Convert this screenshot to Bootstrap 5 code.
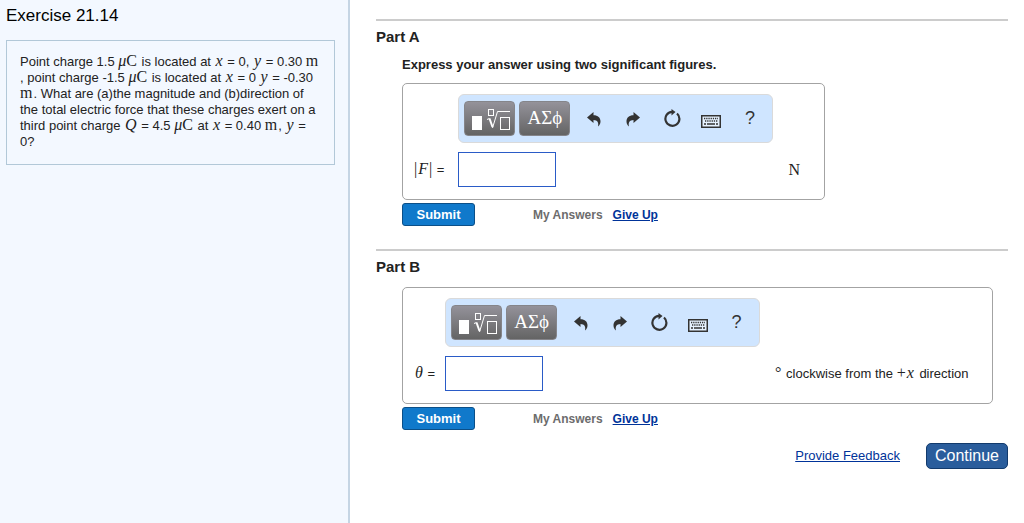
<!DOCTYPE html>
<html lang="en">
<head>
<meta charset="utf-8">
<meta name="viewport" content="width=device-width, initial-scale=1">
<title>Exercise 21.14</title>
<link href="https://cdn.jsdelivr.net/npm/bootstrap@5.3.0/dist/css/bootstrap.min.css" rel="stylesheet">
<style>
  body { font: 13px/16px "Liberation Sans", Arial, sans-serif; color: #222; background: #fff; }
  .problem-pane { background: #f3f8ff; border-right: 2px solid #c5d5e4; padding: 6px 13px 16px 6px; }
  .problem-pane h1 { font-size: 17px; line-height: 20px; color: #000; margin-bottom: 14px; }
  .problem-text { border: 1px solid #b2c8d8; padding: 13px 8px 14px 13px; }
  .work-pane { padding: 19px 16px 16px 26px; }
  .part-section { border-top: 2px solid #ccc; padding-top: 7px; }
  .part-section + .part-section { margin-top: 23px; }
  .part-section h2 { font-size: 15px; line-height: 18px; font-weight: 700; margin-bottom: 11px; }
  .part-body { padding-left: 26px; }
  .instruction { font-weight: 700; margin-bottom: 10px; }
  .maths { font-family: "Liberation Serif", "Times New Roman", serif; font-size: 16px; line-height: 14px; }
  span.maths { margin-right: 1px; }
  i.maths { margin: 0 1px; }
  .answer-box { width: fit-content; max-width: 100%; border: 1px solid #a3a3a3; border-radius: 5px; padding: 10px 23px 12px 11px; }
  .answer-grid { display: grid; grid-template-columns: auto auto auto; row-gap: 9px; align-items: center; }
  .answer-grid .toolbar { grid-column: 2; }
  .answer-grid label { grid-column: 1; padding-right: 10px; white-space: nowrap; }
  .answer-grid .wide-label { padding-right: 14px; }
  .units { padding-left: 15px; }
  .toolbar { width: 315px; height: 49px; background: #cfe5ff; border: 1px solid #dadada; border-radius: 6px; padding-left: 5px; padding-bottom: 1px; }
  .key-btn { width: 51px; height: 35px; margin-right: 4px; padding: 0; border: 1px solid #85858a; border-radius: 4px; background: linear-gradient(#94929a, #646464); color: #fff; font: 19px/30px "Liberation Serif", serif; }
  .icon-btn { width: 39px; height: 35px; padding: 0; border: 0; background: none; color: #333; font-size: 18px; }
  .answer-input { width: 98px; height: 35px; border: 1px solid #2a5bc7; border-radius: 0; padding: 4px; background: #fff; }
  .submit-btn { width: 73px; height: 23px; padding: 0; background: #1079cb; border: 1px solid #0b4f88; border-radius: 3px; color: #fff; font-size: 13px; font-weight: 700; line-height: 16px; margin-right: 58px; }
  .actions { padding-top: 3px; font-size: 12px; font-weight: 700; color: #6c6c6c; }
  .actions a { margin-left: 10px; }
  .actions a, .feedback { color: #003399; }
  .continue-btn { width: 82px; height: 26px; padding: 0; background: #2a5d9c; border: 1px solid #123a6c; border-radius: 5px; color: #fff; font-size: 16px; line-height: 20px; }
  .page-foot { gap: 26px; margin-top: 13px; }
  @media (min-width: 768px) { .problem-pane { flex: 0 0 350px; } }
</style>
</head>
<body>
<svg class="d-none" aria-hidden="true">
  <symbol id="i-root" viewBox="0 0 40 24">
    <rect x="2" y="8" width="10" height="14" fill="#fff"/>
    <g fill="none" stroke="#fff"><rect x="18.5" y="1.5" width="5" height="6"/><path d="M17 11.500L19.500 10.500"/><path d="M19.500 10.500L22.500 19" stroke-width="2"/><path d="M22.500 20L27.500 3.500H40"/><rect x="30.500" y="9.500" width="9" height="12"/></g>
  </symbol>
  <symbol id="i-undo" viewBox="0 0 16 16"><path fill="#333" d="M1 6.500L7.500 1V4.300C12 4.300 14.500 6.800 14.500 10.500C14.500 12.500 13.600 14.300 12 15.500C12.900 11.500 11.500 9.200 7.500 9V12Z"/></symbol>
  <symbol id="i-reset" viewBox="0 0 18 18"><path d="M14 4.500A7 7 0 1 1 9 2.800" fill="none" stroke="#333" stroke-width="2.200"/><path fill="#333" d="M8.500 0L12.500 3L8.500 6.500Z"/></symbol>
  <symbol id="i-keyboard" viewBox="0 0 20 13"><rect x=".75" y=".75" width="18.500" height="11.500" fill="#e6f2ff" stroke="#333" stroke-width="1.500"/><path d="M3 3.500h14M4 6h13" stroke="#333" stroke-width="1.500" stroke-dasharray="1.300 .9"/><path d="M3 9h2M6 9h8M15 9h2" stroke="#333" stroke-width="1.500"/></symbol>
</svg>
<div class="d-md-flex min-vh-100">
  <aside class="problem-pane">
    <h1>Exercise 21.14</h1>
    <div class="problem-text">Point charge 1.5 <span class="maths"><i>μ</i>C</span> is located at <i class="maths">x</i> = 0, <i class="maths">y</i> = 0.30 <span class="maths">m</span><br>
    , point charge -1.5 <span class="maths"><i>μ</i>C</span> is located at <i class="maths">x</i> = 0 <i class="maths">y</i> = -0.30<br>
    <span class="maths">m</span>. What are (a)the magnitude and (b)direction of<br>
    the total electric force that these charges exert on a<br>
    third point charge <i class="maths">Q</i> = 4.5 <span class="maths"><i>μ</i>C</span> at <i class="maths">x</i> = 0.40 <span class="maths">m</span>, <i class="maths">y</i> =<br>
    0?</div>
  </aside>
  <main class="work-pane flex-grow-1">
    <section class="part-section">
      <h2>Part A</h2>
      <div class="part-body">
        <p class="instruction">Express your answer using two significant figures.</p>
        <div class="answer-box"><div class="answer-grid">
          <div class="toolbar d-flex align-items-center">
            <button type="button" class="key-btn" aria-label="Templates"><svg width="40" height="24"><use href="#i-root"/></svg></button>
            <button type="button" class="key-btn">ΑΣϕ</button>
            <button type="button" class="icon-btn" aria-label="Undo"><svg width="16" height="16"><use href="#i-undo"/></svg></button>
            <button type="button" class="icon-btn" aria-label="Redo"><svg width="16" height="16"><use href="#i-undo" transform="matrix(-1 0 0 1 16 0)"/></svg></button>
            <button type="button" class="icon-btn" aria-label="Reset"><svg width="18" height="18"><use href="#i-reset"/></svg></button>
            <button type="button" class="icon-btn pt-1" aria-label="Keyboard"><svg width="20" height="13"><use href="#i-keyboard"/></svg></button>
            <button type="button" class="icon-btn">?</button>
          </div>
          <label for="force" class="wide-label"><span class="maths">|<i class="maths">F</i>|</span> =</label>
          <input id="force" type="text" class="answer-input">
          <span class="units maths">N</span>
        </div></div>
        <div class="actions d-flex align-items-center">
          <button type="submit" class="submit-btn">Submit</button>
          <span>My Answers</span><a href="#">Give Up</a>
        </div>
      </div>
    </section>
    <section class="part-section">
      <h2>Part B</h2>
      <div class="part-body">
        <div class="answer-box"><div class="answer-grid">
          <div class="toolbar d-flex align-items-center">
            <button type="button" class="key-btn" aria-label="Templates"><svg width="40" height="24"><use href="#i-root"/></svg></button>
            <button type="button" class="key-btn">ΑΣϕ</button>
            <button type="button" class="icon-btn" aria-label="Undo"><svg width="16" height="16"><use href="#i-undo"/></svg></button>
            <button type="button" class="icon-btn" aria-label="Redo"><svg width="16" height="16"><use href="#i-undo" transform="matrix(-1 0 0 1 16 0)"/></svg></button>
            <button type="button" class="icon-btn" aria-label="Reset"><svg width="18" height="18"><use href="#i-reset"/></svg></button>
            <button type="button" class="icon-btn pt-1" aria-label="Keyboard"><svg width="20" height="13"><use href="#i-keyboard"/></svg></button>
            <button type="button" class="icon-btn">?</button>
          </div>
          <label for="angle"><i class="maths">θ</i> =</label>
          <input id="angle" type="text" class="answer-input">
          <span class="units"><span class="maths">°</span> clockwise from the <span class="maths">+<i class="maths">x</i></span> direction</span>
        </div></div>
        <div class="actions d-flex align-items-center">
          <button type="submit" class="submit-btn">Submit</button>
          <span>My Answers</span><a href="#">Give Up</a>
        </div>
      </div>
    </section>
    <div class="page-foot d-flex justify-content-end align-items-center">
      <a href="#" class="feedback">Provide Feedback</a>
      <button type="button" class="continue-btn">Continue</button>
    </div>
  </main>
</div>
<script src="https://cdn.jsdelivr.net/npm/bootstrap@5.3.0/dist/js/bootstrap.bundle.min.js"></script>
</body>
</html>
